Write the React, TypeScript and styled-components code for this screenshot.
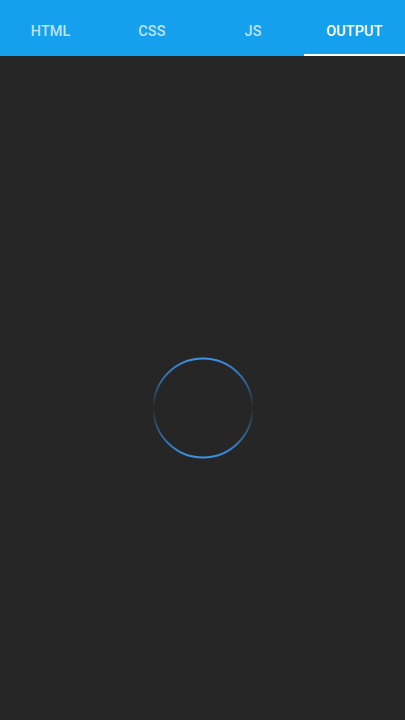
import React, { useState } from 'react';
import styled, { createGlobalStyle, keyframes } from 'styled-components';

const GlobalStyle = createGlobalStyle`
  html, body {
    margin: 0;
    padding: 0;
    height: 100%;
    background: #262626;
    font-family: Roboto, "Liberation Sans", Arial, sans-serif;
  }
  #root {
    height: 100%;
  }
`;

const Screen = styled.div`
  height: 100vh;
  display: flex;
  flex-direction: column;
  background: #262626;
`;

const TabBar = styled.div`
  display: grid;
  grid-template-columns: repeat(4, 1fr);
  height: 56px;
  background: #14a0ed;
  flex-shrink: 0;
`;

const Tab = styled.button<{ $active: boolean }>`
  position: relative;
  border: none;
  background: transparent;
  padding: 7px 0 0;
  font-family: Roboto, "Liberation Sans", Arial, sans-serif;
  font-size: 14.5px;
  font-weight: 500;
  letter-spacing: 0.1px;
  text-transform: uppercase;
  color: ${(p) => (p.$active ? '#ffffff' : 'rgba(255, 255, 255, 0.72)')};
  cursor: pointer;

  &::after {
    content: '';
    position: absolute;
    left: 0;
    right: 0;
    bottom: 0;
    height: 2px;
    background: ${(p) => (p.$active ? '#ffffff' : 'transparent')};
  }
`;

const Output = styled.div`
  flex: 1;
  display: flex;
  align-items: center;
  justify-content: center;
  padding-top: 40px;
`;

const spin = keyframes`
  from { transform: rotate(0deg); }
  to { transform: rotate(360deg); }
`;

const Spinner = styled.svg`
  width: 102px;
  height: 102px;
  animation: ${spin} 1.2s linear infinite;
  animation-play-state: paused;
`;

const tabs = ['HTML', 'CSS', 'JS', 'Output'];

const App: React.FC = () => {
  const [active, setActive] = useState(3);

  return (
    <Screen>
      <GlobalStyle />
      <TabBar>
        {tabs.map((t, i) => (
          <Tab key={t} $active={i === active} onClick={() => setActive(i)}>
            {t}
          </Tab>
        ))}
      </TabBar>
      <Output>
        <Spinner viewBox="0 0 102 102">
          <defs>
            <linearGradient id="ring" x1="0" y1="0" x2="0" y2="1">
              <stop offset="0" stopColor="#3b93ea" stopOpacity="1" />
              <stop offset="0.3" stopColor="#3b93ea" stopOpacity="0.45" />
              <stop offset="0.5" stopColor="#3b93ea" stopOpacity="0" />
              <stop offset="0.7" stopColor="#3b93ea" stopOpacity="0.45" />
              <stop offset="1" stopColor="#3b93ea" stopOpacity="1" />
            </linearGradient>
          </defs>
          <circle cx="51" cy="51" r="49.5" fill="none" stroke="url(#ring)" strokeWidth="1.8" />
        </Spinner>
      </Output>
    </Screen>
  );
};

export default App;
